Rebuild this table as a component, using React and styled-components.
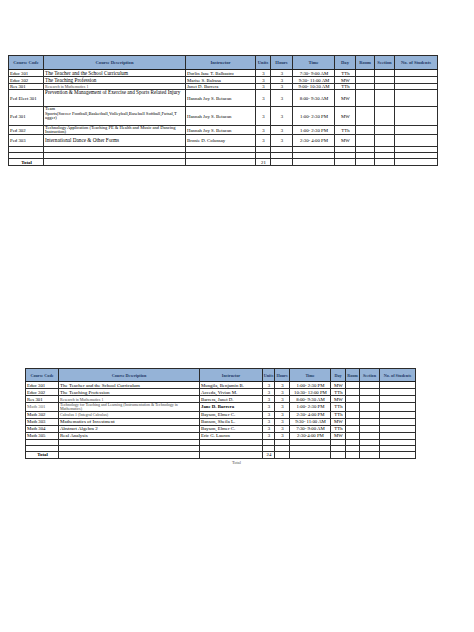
import React from "react";
import styled, { createGlobalStyle } from "styled-components";

const Global = createGlobalStyle`
  html, body { margin: 0; padding: 0; background: #ffffff; }
  body { font-family: "Liberation Serif", "Times New Roman", serif; }
`;

const Page = styled.div`
  width: 474px;
  height: 632px;
  background: #fff;
  display: flex;
  flex-direction: column;
  overflow: hidden;
`;

const Sheet = styled.div`
  margin-top: ${(p) => p.$top}px;
  margin-left: ${(p) => p.$left}px;
  display: flex;
  flex-direction: column;
  width: ${(p) => p.$width}px;
`;

const Table = styled.table`
  border-collapse: collapse;
  table-layout: fixed;
  width: ${(p) => p.$width}px;
  border: 1px solid #222;
`;

const HeadCell = styled.th`
  background: #95b3d7;
  color: #1f3a66;
  font-family: "Liberation Serif", serif;
  font-weight: bold;
  font-size: ${(p) => p.$size || 4.6}px;
  line-height: 5px;
  padding: 0;
  text-align: center;
  vertical-align: middle;
  border: 1px solid #2b2b2b;
  border-bottom: 1.5px solid #1e1e1e;
  white-space: nowrap;
  overflow: hidden;
`;

const Cell = styled.td`
  font-family: "Liberation Serif", serif;
  font-size: ${(p) => p.$size || 4.8}px;
  font-weight: ${(p) => (p.$bold ? "bold" : "normal")};
  color: ${(p) => p.$color || "#000"};
  line-height: ${(p) => p.$lh || 5}px;
  padding: 0 0 0 1px;
  text-align: ${(p) => p.$align || "left"};
  vertical-align: ${(p) => p.$valign || "middle"};
  border: 1px solid #2e2e2e;
  border-top: 1px solid #444;
  white-space: nowrap;
  overflow: visible;
`;

const Row = styled.tr`
  height: ${(p) => p.$h}px;
`;

const Line = styled.div`
  white-space: nowrap;
`;

const Foot = styled.div`
  font-family: "Liberation Serif", serif;
  font-size: 4.4px;
  color: #555;
  margin-top: 1px;
  margin-left: 207px;
`;

const heads = ["Course Code", "Course Description", "Instructor", "Units", "Hours", "Time", "Day", "Room", "Section", "No. of Students"];

const t1cols = [35, 142, 70, 15, 22, 42, 21, 19, 20, 43];
const t2cols = [33, 141, 63, 12, 15, 41, 15, 14, 20, 36];

const t1rows = [
  { h: 7, code: "Educ 301", desc: ["The Teacher and the School Curriculum"], ins: "Dorlin Jane T. Balbastro", u: "3", hr: "3", time: "7:30- 9:00 AM", day: "TTh" },
  { h: 7, code: "Educ 302", desc: ["The Teaching Profession"], ins: "Marise S. Balrasa", u: "3", hr: "3", time: "9:30- 11:00 AM", day: "MW" },
  { h: 6, code: "Res 301", desc: ["Research in Mathematics 1"], small: 4, gray: true, ins: "Janet D. Barrera", u: "3", hr: "3", time: "9:00- 10:30 AM", day: "TTh" },
  { h: 17, code: "Ped Elect 301", desc: ["Prevention & Management of Exercise and Sports Related Injury"], top: true, ins: "Hannah Joy S. Betacan", u: "3", hr: "3", time: "8:00- 9:30 AM", day: "MW" },
  { h: 19, code: "Ped 301", desc: ["Team", "Sports(Soccer Football,Basketball,Volleyball,Baseball Softball,Futsal,T", "agger)"], top: true, lh: 4.6, small: 4.6, ins: "Hannah Joy S. Betacan", u: "3", hr: "3", time: "1:00- 2:30 PM", day: "MW" },
  { h: 9, code: "Ped 302", desc: ["Technology Application (Teaching PE & Health and Music and Dancing", "Instruction)"], lh: 4, small: 4.5, ins: "Hannah Joy S. Betacan", u: "3", hr: "3", time: "1:00- 2:30 PM", day: "TTh" },
  { h: 12, code: "Ped 303", desc: ["International Dance & Other Forms"], ins: "Bronie D. Colunsay", u: "3", hr: "3", time: "2:30- 4:00 PM", day: "MW" },
  { h: 6 },
  { h: 6 },
  { h: 7, total: true, u: "21" },
];

const t2rows = [
  { h: 7, code: "Educ 301", desc: ["The Teacher and the School Curriculum"], ins: "Mungila, Benjamin B.", u: "3", hr: "3", time: "1:00- 2:30 PM", day: "MW" },
  { h: 7, code: "Educ 302", desc: ["The Teaching Profession"], ins: "Acceda, Vivian M.", u: "3", hr: "3", time: "10:30- 12:00 PM", day: "TTh" },
  { h: 7, code: "Res 301", desc: ["Research in Mathematics 1"], small: 4, gray: true, ins: "Barrera, Janet D.", u: "3", hr: "3", time: "8:00- 9:30 AM", day: "MW" },
  { h: 7, code: "Math 301", codeGray: true, desc: ["Technology for Teaching and Learning (Instrumentation & Technology in", "Mathematics)"], lh: 3.8, small: 4, gray: true, ins: "Jane D. Barrera", insBold: true, u: "3", hr: "3", time: "1:00- 2:30 PM", day: "TTh" },
  { h: 7, code: "Math 302", desc: ["Calculus 1 (Integral Calculus)"], small: 4, gray: true, ins: "Bayson, Elmer C.", u: "3", hr: "3", time: "2:30- 4:00 PM", day: "TTh" },
  { h: 7, code: "Math 303", desc: ["Mathematics of Investment"], ins: "Banson, Sheila L.", u: "3", hr: "3", time: "9:30- 11:00 AM", day: "MW" },
  { h: 7, code: "Math 304", desc: ["Abstract Algebra 2"], ins: "Bayson, Elmer C.", u: "3", hr: "3", time: "7:30- 9:00 AM", day: "TTh" },
  { h: 7, code: "Math 305", desc: ["Real Analysis"], ins: "Eric G. Lauron", u: "3", hr: "3", time: "2:30-4:00 PM", day: "MW" },
  { h: 6 },
  { h: 6 },
  { h: 7, total: true, u: "24" },
];

function Schedule({ cols, rows, headH, width, headSize, descSize }) {
  return (
    <Table $width={width}>
      <colgroup>
        {cols.map((w, i) => (
          <col key={i} style={{ width: w }} />
        ))}
      </colgroup>
      <thead>
        <Row $h={headH}>
          {heads.map((h) => (
            <HeadCell key={h} $size={headSize}>{h}</HeadCell>
          ))}
        </Row>
      </thead>
      <tbody>
        {rows.map((r, i) => (
          <Row key={i} $h={r.h}>
            <Cell $align={r.total ? "center" : "left"} $bold={r.total} $color={r.codeGray ? "#666" : undefined}>
              {r.total ? "Total" : r.code || ""}
            </Cell>
            <Cell
              $valign={r.top ? "top" : "middle"}
              $lh={r.lh}
              $size={r.small || descSize}
              $color={r.gray ? "#444" : undefined}
            >
              {(r.desc || []).map((l, k) => (
                <Line key={k}>{l}</Line>
              ))}
            </Cell>
            <Cell $bold={r.insBold}>{r.ins || ""}</Cell>
            <Cell $align="center">{r.u || ""}</Cell>
            <Cell $align="center">{r.hr || ""}</Cell>
            <Cell $align="center">{r.time || ""}</Cell>
            <Cell $align="center">{r.day || ""}</Cell>
            <Cell />
            <Cell />
            <Cell />
          </Row>
        ))}
      </tbody>
    </Table>
  );
}

export default function App() {
  return (
    <Page>
      <Global />
      <Sheet $top={55} $left={8} $width={429}>
        <Schedule cols={t1cols} rows={t1rows} headH={14} width={429} descSize={5.2} />
      </Sheet>
      <Sheet $top={202} $left={25} $width={390}>
        <Schedule cols={t2cols} rows={t2rows} headH={13} width={390} headSize={4.2} descSize={5} />
        <Foot>Total</Foot>
      </Sheet>
    </Page>
  );
}
